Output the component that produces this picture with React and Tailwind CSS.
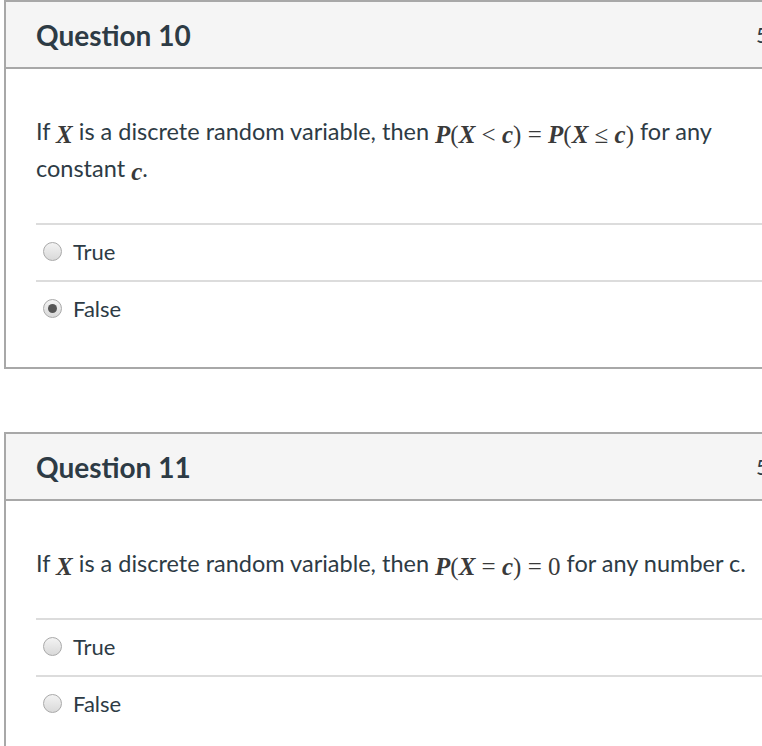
import React from "react";

const M = ({ children }) => (
  <span className="font-['Liberation_Serif','DejaVu_Serif',serif] italic font-semibold text-[25px] text-[#3a3a3a] align-[-3px] leading-none">
    {children}
  </span>
);

const Up = ({ children }) => (
  <span className="not-italic font-normal">{children}</span>
);

function Radio({ checked }) {
  return (
    <span className="w-[19px] h-[19px] rounded-full border border-[#a9a9a9] bg-gradient-to-b from-[#f3f3f3] to-[#d9d9d9] flex items-center justify-center shrink-0">
      {checked && <span className="w-[9px] h-[9px] rounded-full bg-[#555]" />}
    </span>
  );
}

function Answer({ label, checked }) {
  return (
    <div className="border-t-2 border-[#dcdcdc] h-[57px] flex items-center pl-[7px] pb-[3px] gap-[11px]">
      <Radio checked={checked} />
      <span className="text-[22px] text-[#2d3b45]">{label}</span>
    </div>
  );
}

function Question({ number, children, answers }) {
  return (
    <div className="ml-[4px] w-[832px] border-2 border-[#a8a8a8] bg-white">
      <div className="h-[67px] bg-[#f5f5f5] border-b-2 border-[#a8a8a8] flex items-center justify-between px-[30px]">
        <h2 className="text-[28px] font-bold text-[#2d3b45]">Question {number}</h2>
        <span className="text-[22px] text-[#2d3b45]">5 pts</span>
      </div>
      <div className="pl-[30px] pt-[44px] pb-[30px]">
        <p className="text-[23.5px] leading-[37px] text-[#2d3b45] w-[722px]">{children}</p>
        <div className="mt-[36px]">
          {answers.map((a) => (
            <Answer key={a.label} {...a} />
          ))}
        </div>
      </div>
    </div>
  );
}

export default function App() {
  return (
    <div className="w-[762px] h-[746px] overflow-hidden bg-white font-['Lato','Open_Sans',sans-serif] flex flex-col gap-[63px]">
      <Question
        number={10}
        answers={[
          { label: "True", checked: false },
          { label: "False", checked: true },
        ]}
      >
        If <M>X</M> is a discrete random variable, then{" "}
        <M>
          P<Up>(</Up>X <Up>&lt;</Up> c<Up>)</Up> <Up>=</Up> P<Up>(</Up>X <Up>≤</Up> c<Up>)</Up>
        </M>{" "}
        for any constant <M>c</M>.
      </Question>
      <Question
        number={11}
        answers={[
          { label: "True", checked: false },
          { label: "False", checked: false },
        ]}
      >
        If <M>X</M> is a discrete random variable, then{" "}
        <M>
          P<Up>(</Up>X <Up>=</Up> c<Up>) = 0</Up>
        </M>{" "}
        for any number c.
      </Question>
    </div>
  );
}
